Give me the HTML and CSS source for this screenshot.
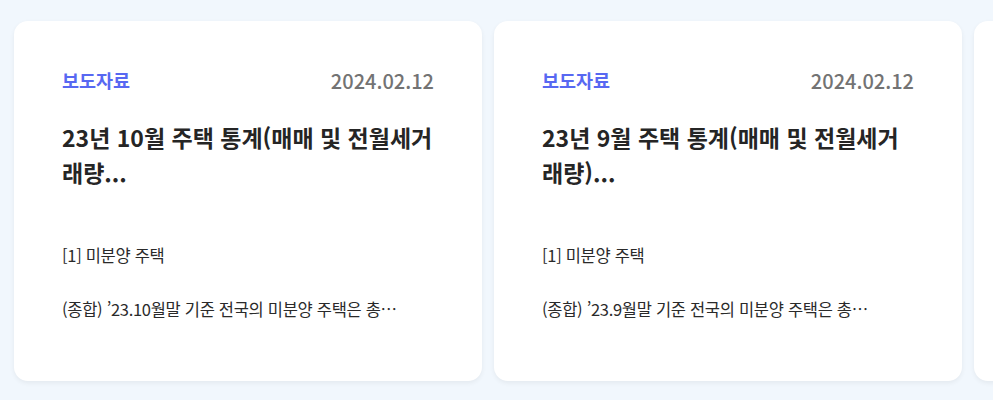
FILE: index.html
```html
<!DOCTYPE html>
<html lang="ko">
<head>
    <meta charset="UTF-8">
    <meta name="viewport" content="width=device-width, initial-scale=1.0">
    <title>보도자료</title>
    <link rel="stylesheet" href="styles.css">
</head>
<body>
    <div class="news-list">
        <div class="news-card">
            <div class="news-header">
                <span class="news-type">보도자료</span>
                <span class="news-date">2024.02.12</span>
            </div>
            <div class="news-title">23년 10월 주택 통계(매매 및 전월세거래량...</div>
            <div class="news-body">
                <p>[1] 미분양 주택</p>
                <p>(종합) ’23.10월말 기준 전국의 미분양 주택은 총…</p>
            </div>
        </div>

        <div class="news-card">
            <div class="news-header">
                <span class="news-type">보도자료</span>
                <span class="news-date">2024.02.12</span>
            </div>
            <div class="news-title">23년 9월 주택 통계(매매 및 전월세거래량)...</div>
            <div class="news-body">
                <p>[1] 미분양 주택</p>
                <p>(종합) ’23.9월말 기준 전국의 미분양 주택은 총…</p>
            </div>
        </div>

        <!-- next card, scrolled out of view -->
        <div class="news-card"></div>
    </div>
</body>
</html>
```

FILE: styles.css
```css
body {
    margin: 0;
    font-family: "Noto Sans CJK KR", "Noto Sans", sans-serif;
    background-color: #f1f7fd;
    overflow: hidden;
}
.news-list {
    display: flex;
    gap: 12px;
    padding: 21px 14px;
}
.news-card {
    flex: 0 0 468px;
    height: 360px;
    box-sizing: border-box;
    padding: 47px 48px;
    background: white;
    border-radius: 14px;
    box-shadow: 0 2px 5px rgba(0,0,0,0.06);
}
.news-header {
    display: flex;
    justify-content: space-between;
    align-items: center;
    height: 24px;
}
.news-type {
    font-size: 18.5px;
    font-weight: bold;
    color: #5868f2;
}
.news-date {
    font-size: 20px;
    font-weight: 500;
    color: #737373;
}
.news-title {
    margin-top: 28px;
    font-size: 23px;
    line-height: 35px;
    font-weight: bold;
    color: #252525;
}
.news-body {
    margin-top: 54px;
    font-size: 16.5px;
    color: #2a2a2a;
    letter-spacing: -0.3px;
}
.news-body p {
    margin: 0 0 32px;
    line-height: 22px;
}
```
